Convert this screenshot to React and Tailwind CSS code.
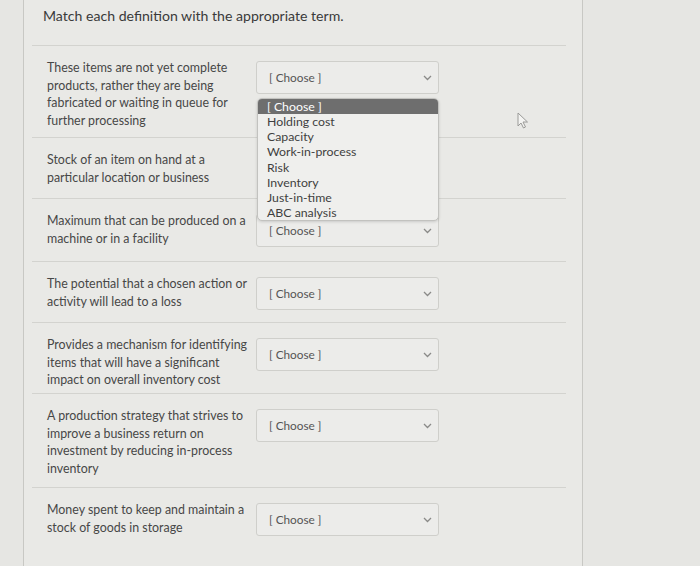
import React from "react";

const rows = [
  { text: "These items are not yet complete products, rather they are being fabricated or waiting in queue for further processing", h: "h-[92px]", open: true },
  { text: "Stock of an item on hand at a particular location or business", h: "h-[61px]", hidden: true },
  { text: "Maximum that can be produced on a machine or in a facility", h: "h-[63px]" },
  { text: "The potential that a chosen action or activity will lead to a loss", h: "h-[61px]" },
  { text: "Provides a mechanism for identifying items that will have a significant impact on overall inventory cost", h: "h-[71px]" },
  { text: "A production strategy that strives to improve a business return on investment by reducing in-process inventory", h: "h-[94px]" },
  { text: "Money spent to keep and maintain a stock of goods in storage", h: "h-[70px]", last: true },
];

const options = ["Holding cost", "Capacity", "Work-in-process", "Risk", "Inventory", "Just-in-time", "ABC analysis"];

function Chevron() {
  return (
    <svg width="9" height="6" viewBox="0 0 9 6" className="shrink-0">
      <path d="M1 1l3.5 3.5L8 1" fill="none" stroke="#8a8a88" strokeWidth="1.3" />
    </svg>
  );
}

function Select({ open, hidden }) {
  return (
    <div className="relative mt-[2px]">
      <div className={`w-[183px] h-[33px] flex items-center justify-between pl-[12px] pr-[6px] bg-[#ececea] border border-[#cfcfcb] rounded-[3px] text-[11.8px] text-[#555] ${hidden ? "invisible" : ""}`}>
        <span>[ Choose ]</span>
        <Chevron />
      </div>
      {open && (
        <div className="absolute top-[37px] left-[1px] w-[182px] z-10 bg-[#efefed] border border-[#c2c2bf] rounded-[5px] shadow-[0_1px_3px_rgba(0,0,0,0.15)] text-[12.3px] leading-[15.2px] text-[#3f3f3f]">
          <div className="bg-[#6e6e6e] text-white rounded-t-[4px] pl-[9px] h-[15px]">[ Choose ]</div>
          {options.map((o) => (
            <div key={o} className="pl-[9px]">{o}</div>
          ))}
        </div>
      )}
    </div>
  );
}

export default function App() {
  return (
    <div className="relative w-[700px] h-[566px] overflow-hidden bg-[#e6e6e3] text-[#444] font-['Lato','Liberation_Sans',sans-serif]">
      <div className="ml-[23px] w-[560px] h-full bg-[#e9e9e6] border-l border-r border-[#c8c8c4] pl-[8px]">
        <h1 className="pl-[11px] pt-[6px] h-[45px] text-[14.1px] leading-[20px] text-[#3a3a3a] font-normal">
          Match each definition with the appropriate term.
        </h1>
        <div className="w-[534px] border-t border-[#d3d3cf]">
          {rows.map((r, i) => (
            <div key={i} className={`${r.h} flex items-start pt-[13px] pl-[15px] ${r.last ? "" : "border-b border-[#d3d3cf]"}`}>
              <p className="w-[202px] text-[12.4px] leading-[17.5px] text-[#474747]">{r.text}</p>
              <div className="ml-[7px]">
                <Select open={r.open} hidden={r.hidden} />
              </div>
            </div>
          ))}
        </div>
      </div>
      <svg className="absolute left-[517px] top-[112px]" width="12" height="17" viewBox="0 0 12 17">
        <path d="M1 1v13l3-3 2.5 5 2-1-2.5-5h4.5z" fill="#f4f4f2" stroke="#9a9a98" strokeWidth="1" strokeLinejoin="round" />
      </svg>
    </div>
  );
}
